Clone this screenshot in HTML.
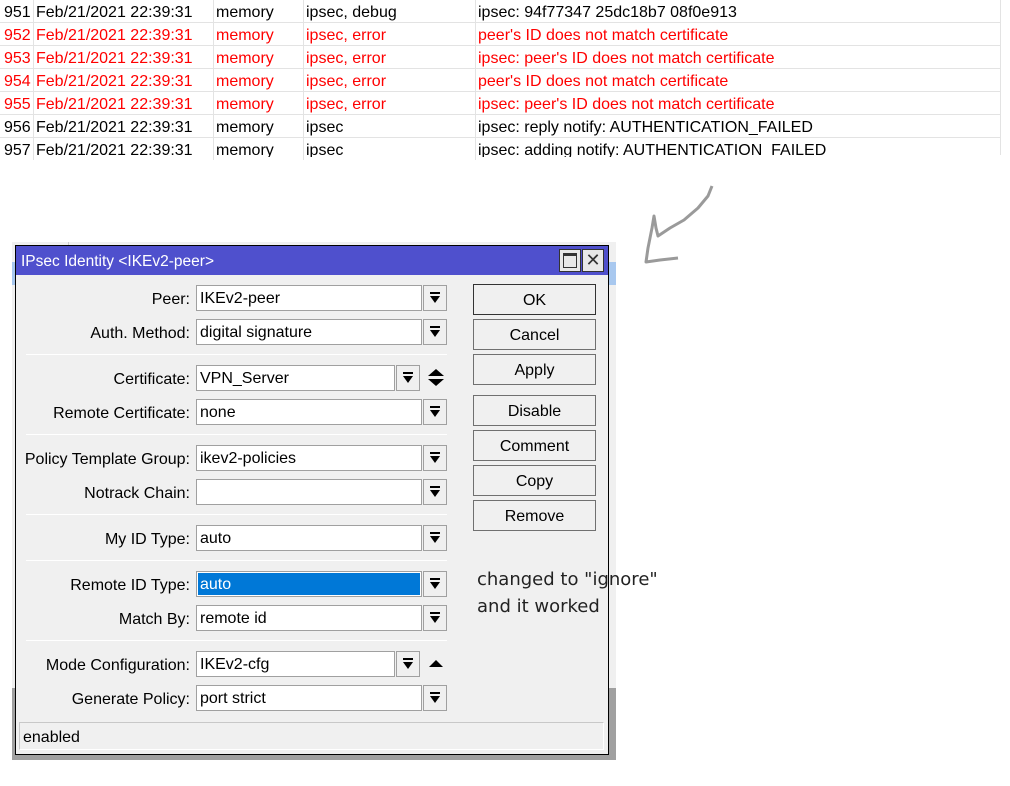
<!DOCTYPE html>
<html><head><style>
*{margin:0;padding:0;box-sizing:border-box}
body{width:1010px;height:786px;background:#fff;position:relative;overflow:hidden;font-family:"Liberation Sans",Arial,sans-serif;font-size:16px;color:#000}
.r{position:absolute;left:0;height:23px;width:1001px;border-bottom:1px solid #e3e3e3;white-space:nowrap;line-height:25px;overflow:hidden}
.r span{position:absolute;top:0}
.red{color:#f00}
.vl{position:absolute;top:0;width:1px;height:160px;background:#e3e3e3}
.ab{position:absolute}
.lbl{position:absolute;right:820px;text-align:right;white-space:nowrap;line-height:27px;height:26px}
.in{position:absolute;left:196px;width:226px;height:26px;background:#fff;border:1px solid #a0a0a0;line-height:26px;padding-left:3px}
.dd{position:absolute;width:24px;height:26px;border:1px solid #a0a0a0;background:#f0f0f0}
.dd:before{content:"";position:absolute;left:6px;top:6px;width:10px;height:2px;background:#000}
.dd:after{content:"";position:absolute;left:6px;top:10px;border-left:5px solid transparent;border-right:5px solid transparent;border-top:7px solid #000}
.sep{position:absolute;left:26px;width:421px;height:1px;background:#c8c8c8;border-bottom:1px solid #fff}
.btn{position:absolute;left:473px;width:123px;height:31px;border:1px solid #707070;background:#f0f0f0;text-align:center;line-height:32px}
</style></head><body>
<div class="vl" style="left:33px"></div><div class="vl" style="left:213px"></div><div class="vl" style="left:303px"></div><div class="vl" style="left:475px"></div><div class="vl" style="left:1000px;height:155px"></div>
<div class="r" style="top:0"><span style="left:4px">951</span><span style="left:36px">Feb/21/2021 22:39:31</span><span style="left:216px">memory</span><span style="left:306px">ipsec, debug</span><span style="left:478px">ipsec: 94f77347 25dc18b7 08f0e913</span></div>
<div class="r red" style="top:23px"><span style="left:4px">952</span><span style="left:36px">Feb/21/2021 22:39:31</span><span style="left:216px">memory</span><span style="left:306px">ipsec, error</span><span style="left:478px">peer's ID does not match certificate</span></div>
<div class="r red" style="top:46px"><span style="left:4px">953</span><span style="left:36px">Feb/21/2021 22:39:31</span><span style="left:216px">memory</span><span style="left:306px">ipsec, error</span><span style="left:478px">ipsec: peer's ID does not match certificate</span></div>
<div class="r red" style="top:69px"><span style="left:4px">954</span><span style="left:36px">Feb/21/2021 22:39:31</span><span style="left:216px">memory</span><span style="left:306px">ipsec, error</span><span style="left:478px">peer's ID does not match certificate</span></div>
<div class="r red" style="top:92px"><span style="left:4px">955</span><span style="left:36px">Feb/21/2021 22:39:31</span><span style="left:216px">memory</span><span style="left:306px">ipsec, error</span><span style="left:478px">ipsec: peer's ID does not match certificate</span></div>
<div class="r" style="top:115px"><span style="left:4px">956</span><span style="left:36px">Feb/21/2021 22:39:31</span><span style="left:216px">memory</span><span style="left:306px">ipsec</span><span style="left:478px">ipsec: reply notify: AUTHENTICATION_FAILED</span></div>
<div class="r" style="top:138px;height:19px;border:0"><span style="left:4px">957</span><span style="left:36px">Feb/21/2021 22:39:31</span><span style="left:216px">memory</span><span style="left:306px">ipsec</span><span style="left:478px">ipsec: adding notify: AUTHENTICATION_FAILED</span></div>
<div class="ab" style="left:958px;top:0;width:42px;height:20px;background:#fff"></div>

<svg class="ab" style="left:640px;top:182px" width="80" height="90"><path d="M72 4 L68 14 L58 26 L44 38 L30 46 L18 54 L16 46 L14 34 L12 46 L8 66 L6 80 L20 78 L38 76" fill="none" stroke="#9a9a9a" stroke-width="3" stroke-linejoin="round"/></svg>

<div class="ab" style="left:12px;top:242px;width:604px;height:518px;background:#f0f0f0"></div>
<div class="ab" style="left:12px;top:262px;width:604px;height:23px;background:#a8c8ef"></div>
<div class="ab" style="left:12px;top:688px;width:604px;height:72px;background:#a0a0a0"></div>
<div class="ab" style="left:68px;top:242px;width:1px;height:5px;background:#ccc"></div>

<div class="ab" style="left:15px;top:245px;width:594px;height:510px;background:#f0f0f0;border:1px solid #000"></div>
<div class="ab" style="left:16px;top:246px;width:592px;height:29px;background:#4f50cd;color:#fff;line-height:32px;padding-left:5px;font-size:15.5px">IPsec Identity &lt;IKEv2-peer&gt;</div>
<div class="ab" style="left:559px;top:249px;width:22px;height:23px;background:#e8e8e8;border:1px solid #333"><div style="position:absolute;left:3px;top:3px;width:14px;height:15px;border:1px solid #333;border-top-width:3px"></div></div>
<div class="ab" style="left:582px;top:249px;width:22px;height:23px;background:#e8e8e8;border:1px solid #333;text-align:center;line-height:21px;font-size:18px;color:#333">✕</div>

<div class="lbl" style="top:286px">Peer:</div><div class="in" style="top:285px">IKEv2-peer</div><div class="dd" style="left:423px;top:285px"></div>
<div class="lbl" style="top:320px">Auth. Method:</div><div class="in" style="top:319px">digital signature</div><div class="dd" style="left:423px;top:319px"></div>
<div class="sep" style="top:354px"></div>
<div class="lbl" style="top:366px">Certificate:</div><div class="in" style="top:365px;width:199px">VPN_Server</div><div class="dd" style="left:396px;top:365px"></div>
<div class="ab" style="left:428px;top:369px;border-left:8px solid transparent;border-right:8px solid transparent;border-bottom:7px solid #000"></div>
<div class="ab" style="left:428px;top:379px;border-left:8px solid transparent;border-right:8px solid transparent;border-top:7px solid #000"></div>
<div class="lbl" style="top:400px">Remote Certificate:</div><div class="in" style="top:399px">none</div><div class="dd" style="left:423px;top:399px"></div>
<div class="sep" style="top:434px"></div>
<div class="lbl" style="top:446px">Policy Template Group:</div><div class="in" style="top:445px">ikev2-policies</div><div class="dd" style="left:423px;top:445px"></div>
<div class="lbl" style="top:480px">Notrack Chain:</div><div class="in" style="top:479px"></div><div class="dd" style="left:423px;top:479px"></div>
<div class="sep" style="top:514px"></div>
<div class="lbl" style="top:526px">My ID Type:</div><div class="in" style="top:525px">auto</div><div class="dd" style="left:423px;top:525px"></div>
<div class="sep" style="top:560px"></div>
<div class="lbl" style="top:572px">Remote ID Type:</div><div class="in" style="top:571px;background:#0078d7;color:#fff;box-shadow:inset 0 0 0 1px #fff">auto</div><div class="dd" style="left:423px;top:571px"></div>
<div class="lbl" style="top:606px">Match By:</div><div class="in" style="top:605px">remote id</div><div class="dd" style="left:423px;top:605px"></div>
<div class="sep" style="top:640px"></div>
<div class="lbl" style="top:652px">Mode Configuration:</div><div class="in" style="top:651px;width:199px">IKEv2-cfg</div><div class="dd" style="left:396px;top:651px"></div>
<div class="ab" style="left:429px;top:660px;border-left:7px solid transparent;border-right:7px solid transparent;border-bottom:7px solid #000"></div>
<div class="lbl" style="top:686px">Generate Policy:</div><div class="in" style="top:685px">port strict</div><div class="dd" style="left:423px;top:685px"></div>

<div class="btn" style="top:284px;border-color:#333">OK</div>
<div class="btn" style="top:319px">Cancel</div>
<div class="btn" style="top:354px">Apply</div>
<div class="btn" style="top:395px">Disable</div>
<div class="btn" style="top:430px">Comment</div>
<div class="btn" style="top:465px">Copy</div>
<div class="btn" style="top:500px">Remove</div>

<div class="ab" style="left:19px;top:722px;width:585px;height:28px;border:1px solid #c8c8c8;border-right-color:#fff;border-bottom-color:#fff;line-height:29px;padding-left:3px">enabled</div>

<div class="ab" style="left:477px;top:566px;font-family:'DejaVu Sans',sans-serif;font-size:18px;line-height:27px;color:#222">changed to "ignore"<br>and it worked</div>
</body></html>
